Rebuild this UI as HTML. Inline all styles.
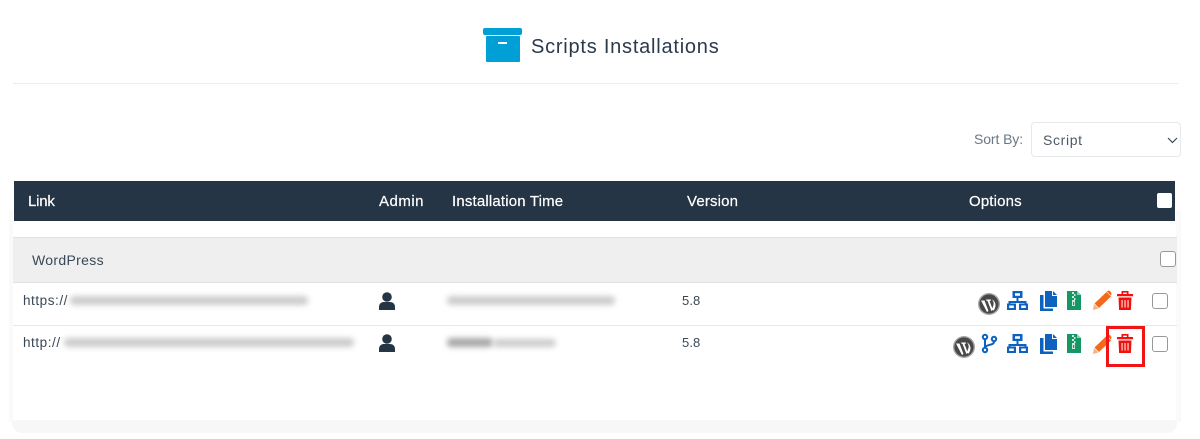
<!DOCTYPE html>
<html><head><meta charset="utf-8"><style>
html,body{margin:0;padding:0;background:#fff;width:1200px;height:439px;overflow:hidden}
body{position:relative;font-family:"Liberation Sans",sans-serif;color:#2a3a4c}
.a{position:absolute}
.t{position:absolute;white-space:nowrap;line-height:20px}
.h{font-size:15px;color:#fff;top:192px;-webkit-text-stroke:.2px #fff}
.cb{position:absolute;box-sizing:border-box;width:16px;height:16px;border:1.500px solid #96999c;border-radius:3px;background:#fff}
.blur{position:absolute;background:#cccccc;filter:blur(2.800px);border-radius:4px}
svg{position:absolute;overflow:visible}
</style></head><body>
<div class="a" style="left:12px;top:420px;width:1165px;height:13px;background:#f7f7f7;border-radius:0 0 10px 10px"></div>
<div class="a" style="left:9px;top:210px;width:4px;height:212px;background:#fafafa"></div>
<div class="a" style="left:1176px;top:210px;width:5px;height:212px;background:#fafafa"></div>
<div class="a" style="left:13px;top:83px;width:1165px;height:1px;background:#ececec"></div>

<div class="a" style="left:483px;top:28px;width:39px;height:7px;background:#00a0d6;border-radius:2px"></div>
<div class="a" style="left:486px;top:36px;width:34px;height:26px;background:#00a0d6;border-radius:1px"></div>
<div class="a" style="left:498px;top:42px;width:9px;height:2px;background:#fff"></div>
<div class="t" style="left:531px;top:36px;font-size:20px;line-height:22px;letter-spacing:.77px;color:#2a3a4c">Scripts Installations</div>

<div class="t" style="left:974px;top:129px;font-size:14px;letter-spacing:-.1px;color:#6a7885">Sort By:</div>
<div class="a" style="left:1031px;top:122px;width:150px;height:35px;box-sizing:border-box;border:1px solid #e6e8ea;border-radius:4px"></div>
<div class="t" style="left:1043px;top:130px;font-size:14px;letter-spacing:.65px;color:#4c5a68">Script</div>
<svg style="left:1167px;top:137px" width="11" height="7" viewBox="0 0 11 7"><path d="M1 1l4.500 4.500L10 1" fill="none" stroke="#3d4853" stroke-width="1.200"/></svg>

<div class="a" style="left:14px;top:181px;width:1161px;height:40px;background:#263545"></div>
<div class="t h" style="left:28px;letter-spacing:-.2px">Link</div>
<div class="t h" style="left:379px;letter-spacing:.5px">Admin</div>
<div class="t h" style="left:452px;letter-spacing:.17px">Installation Time</div>
<div class="t h" style="left:687px;letter-spacing:.15px">Version</div>
<div class="t h" style="left:969px;letter-spacing:.15px">Options</div>
<div class="a" style="left:1157px;top:193px;width:15px;height:15px;background:#fff;border-radius:2px"></div>

<div class="a" style="left:13px;top:237px;width:1164px;height:45px;background:#efefef;border-top:1px solid #e2e2e2"></div>
<div class="t" style="left:32px;top:250px;font-size:14px;letter-spacing:.33px;color:#3a4856">WordPress</div>
<div class="cb" style="left:1160px;top:251px"></div>
<div class="a" style="left:13px;top:282px;width:1164px;height:1px;background:#e2e2e2"></div>
<div class="a" style="left:13px;top:325px;width:1164px;height:1px;background:#e8e8e8"></div>

<div class="t" style="left:23px;top:291px;font-size:13.500px;letter-spacing:.55px;color:#3a4856">https://</div>
<div class="blur" style="left:70px;top:296px;width:238px;height:9px"></div>
<div class="t" style="left:23px;top:333px;font-size:13.500px;letter-spacing:.55px;color:#3a4856">http://</div>
<div class="blur" style="left:64px;top:338px;width:290px;height:9px"></div>
<div class="blur" style="left:447px;top:296px;width:168px;height:9px"></div>
<div class="blur" style="left:447px;top:338px;width:46px;height:9px;background:#a8a8a8"></div>
<div class="blur" style="left:493px;top:339px;width:63px;height:8px"></div>
<div class="t" style="left:682px;top:291px;font-size:13px;letter-spacing:.1px;color:#3a4856">5.8</div>
<div class="t" style="left:682px;top:333px;font-size:13px;letter-spacing:.1px;color:#3a4856">5.8</div>

<svg width="0" height="0" style="left:0;top:0"><defs>
<g id="user"><circle cx="8" cy="5" r="4.800" fill="#263545"/><path d="M0 18v-3c0-3 2-5 5-5h6c3 0 5 2 5 5v3z" fill="#263545"/></g>
<g id="wp"><circle cx="11" cy="11" r="11" fill="#a5a5a5"/><circle cx="11" cy="11" r="9.600" fill="#484848"/><path d="M3 7.500h3.500l4 10.500-1.500 1zM8 6.500h5l-.5 1.500-1-.1 3 8-1 2.500-4-10.500-1-.2zM14 6.500c2.500 1 4.500 4.500 3 8.500l-1.200 2.500-2-.5 1.700-5c.5-2 0-3.500-1.500-5.500z" fill="#fff"/></g>
<g id="net" fill="#0d62bf"><path d="M5.500 0h10v7h-10zM8 2.200v2.600h5V2.200z" fill-rule="evenodd"/><path d="M9.500 7h2v3h8v3h-2v-1H3.500v1h-2v-3h8z"/><path d="M0 12.500h9V19H0zM2.200 14.500v2.500h4.600v-2.500zM12 12.500h9V19h-9zM14.200 14.500v2.500h4.600v-2.500z" fill-rule="evenodd"/></g>
<g id="copy" fill="#0d62bf"><path d="M5 0h7v5h5v11H5z"/><path d="M13 0l4 4h-4z"/><path d="M0 4h3.500v13.500H13V20H0z"/></g>
<g id="zip"><path d="M0 0h10l4 4v15H0z" fill="#149764"/><path d="M10 0l4 4h-4z" fill="#8fd0b5"/><path d="M5 1h2v2H5zM7 3h1.500v2H7zM5 5h2v2H5zM7 7h1.500v2H7zM5 9h3v6H5z" fill="#cfe9de"/><rect x="6" y="11" width="1.200" height="3" fill="#149764"/></g>
<g id="pen"><path d="M13.500 1 18 5.500 6 17 1.500 12.500z" fill="#f26a1b"/><path d="M14.500 0c1-.6 2-.4 3 .6s1.300 2 .7 3l-.5.800L14 0.600z" fill="#f26a1b"/><path d="M1 13l4.500 4.500L0 19z" fill="#f8b184"/></g>
<g id="bin"><path d="M0 3h16v2.200H0zM4.500 0h7v3H9.800V1.600H6.200V3H4.500z" fill="#f40f0f"/><path d="M1.500 6.500h13l-.6 12.500H2.100z" fill="#f40f0f"/><path d="M4.300 9h1.500v7.500H4.300zM7.300 9h1.500v7.500H7.300zM10.300 9h1.500v7.500h-1.500z" fill="#f9b5ae"/></g>
<g id="branch" fill="none" stroke="#0d62bf" stroke-width="2"><circle cx="3" cy="3" r="2.200"/><circle cx="3" cy="16" r="2.200"/><circle cx="12" cy="5" r="2.200"/><path d="M3 5v9M12 7.500c0 4-6 2.500-9 5.500"/></g>
</defs></svg>

<svg style="left:379px;top:292px" width="16" height="18"><use href="#user"/></svg>
<svg style="left:379px;top:334px" width="16" height="18"><use href="#user"/></svg>

<svg style="left:978px;top:293px" width="22" height="22"><use href="#wp"/></svg>
<svg style="left:1007px;top:291px" width="21" height="19"><use href="#net"/></svg>
<svg style="left:1040px;top:291px" width="17" height="20"><use href="#copy"/></svg>
<svg style="left:1067px;top:291px" width="14" height="19"><use href="#zip"/></svg>
<svg style="left:1093px;top:291px" width="18" height="19"><use href="#pen"/></svg>
<svg style="left:1117px;top:291px" width="16" height="19"><use href="#bin"/></svg>
<div class="cb" style="left:1152px;top:293px"></div>

<svg style="left:953px;top:336px" width="22" height="22"><use href="#wp"/></svg>
<svg style="left:982px;top:334px" width="15" height="19"><use href="#branch"/></svg>
<svg style="left:1007px;top:334px" width="21" height="19"><use href="#net"/></svg>
<svg style="left:1040px;top:334px" width="17" height="20"><use href="#copy"/></svg>
<svg style="left:1067px;top:334px" width="14" height="19"><use href="#zip"/></svg>
<svg style="left:1093px;top:335px" width="18" height="19"><use href="#pen"/></svg>
<svg style="left:1117px;top:334px" width="16" height="19"><use href="#bin"/></svg>
<div class="a" style="left:1106px;top:326px;width:39px;height:41px;box-sizing:border-box;border:3px solid #f01414"></div>
<div class="cb" style="left:1152px;top:336px"></div>
</body></html>
